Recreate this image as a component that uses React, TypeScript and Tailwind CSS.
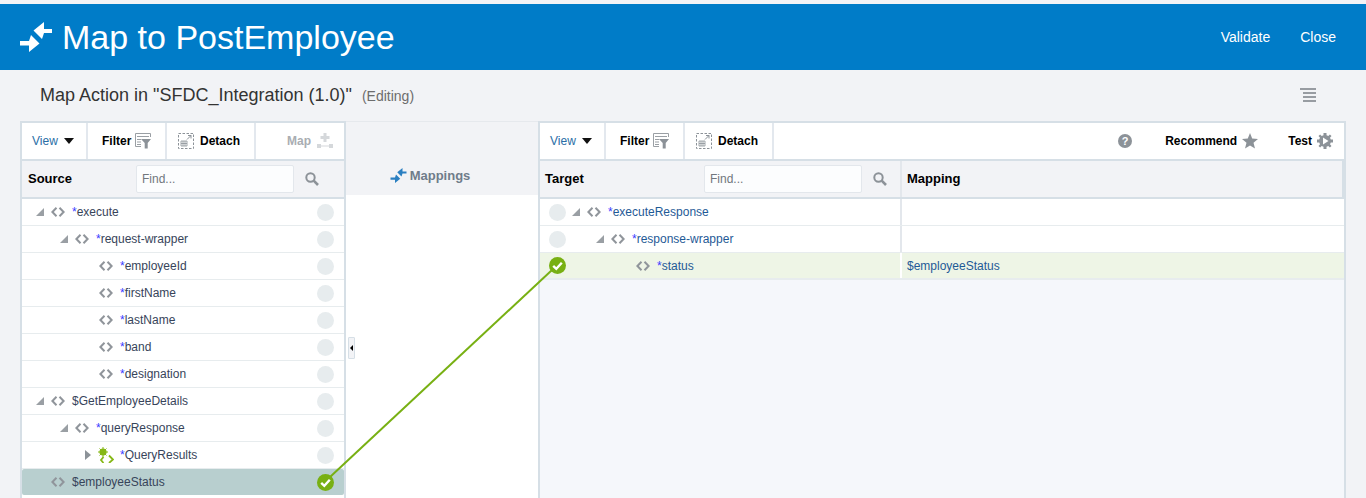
import React from 'react';

const sans = "font-['Liberation_Sans',Arial,sans-serif]";

const MapIcon = ({ className, color }: { className: string; color: string }) => (
  <svg viewBox="0 0 32 30" className={className} fill={color}>
    <path d="M24 0 L13.5 8.5 L22 17 L24 11 H32 V7 H24 Z" />
    <path d="M9 30 L19.5 21.5 L11 13 L9 19 H0 V23.5 H9 Z" />
  </svg>
);

const Code = ({ className = '' }: { className?: string }) => (
  <svg viewBox="0 0 14 10" className={`h-[10px] w-[14px] shrink-0 ${className}`} fill="none" stroke="#90959b" strokeWidth="2">
    <path d="M5.5 .8 L1.4 5 L5.5 9.2 M8.5 .8 L12.6 5 L8.5 9.2" />
  </svg>
);

const Expanded = () => (
  <svg viewBox="0 0 8 8" className="h-2 w-2 shrink-0" fill="#9a9fa4">
    <path d="M8 0 V8 H0 Z" />
  </svg>
);

const Collapsed = () => (
  <svg viewBox="0 0 6 10" className="h-[10px] w-[6px] shrink-0" fill="#8c9298">
    <path d="M0 0 L6 5 L0 10 Z" />
  </svg>
);

const Dot = () => <span className="block h-[17px] w-[17px] shrink-0 rounded-full bg-[#e7ecee]" />;

const Check = () => (
  <svg viewBox="0 0 17 17" className="h-[17px] w-[17px] shrink-0">
    <circle cx="8.5" cy="8.5" r="8.5" fill="#78b013" />
    <path d="M4.2 8.8 L7.3 11.8 L12.8 5.8" fill="none" stroke="#fff" strokeWidth="2.4" />
  </svg>
);

const FilterIcon = () => (
  <svg viewBox="0 0 16 16" className="h-4 w-4 shrink-0" fill="none" stroke="#9a9fa4">
    <path d="M.5 .5 H15.5 M.5 .5 V13.5 H6 M15.5 .5 V4" />
    <path d="M2 3.5 H14 M2 6.5 H6 M2 9 H6 M2 11.5 H6" />
    <path d="M6 6 H16 L12.7 10 V15.5 H9.7 V10 Z" fill="#8c9298" stroke="none" />
  </svg>
);

const DetachIcon = () => (
  <svg viewBox="0 0 16 16" className="h-4 w-4 shrink-0" fill="none" stroke="#8c9298">
    <path d="M.5 .5 H15.5 V15.5 H.5 Z" strokeDasharray="2.5 1.5" />
    <path d="M9 6.5 L13 2.5 M10 2.5 H13 V5.5" />
    <path d="M3 8 H9 V13 H3 Z M3 10.5 H9 M5 8 V13 M7 8 V13" strokeWidth=".8" />
  </svg>
);

const MapPlusIcon = () => (
  <svg viewBox="0 0 16 16" className="h-4 w-4 shrink-0" fill="#d5d8db">
    <path d="M6.5 0 H9.5 V3 H12.5 V6 H9.5 V9 H6.5 V6 H3.5 V3 H6.5 Z" />
    <path d="M0 11 H4 V15 H0 Z M12 11 H16 V15 H12 Z M4 12.5 H12 V13.5 H4 Z" />
  </svg>
);

const SearchIcon = () => (
  <svg viewBox="0 0 14 14" className="h-[14px] w-[14px] shrink-0" fill="none" stroke="#8c9298">
    <circle cx="5.5" cy="5.5" r="4.2" strokeWidth="2" />
    <path d="M8.7 8.7 L13 13" strokeWidth="2.6" />
  </svg>
);

const Caret = () => (
  <svg viewBox="0 0 10 6" className="h-[6px] w-[10px] shrink-0" fill="#111">
    <path d="M0 0 H10 L5 6 Z" />
  </svg>
);

const Toolbar = ({ children }: { children?: React.ReactNode }) => (
  <div className="flex h-[36px] shrink-0 items-stretch bg-white">
    <div className="flex w-[66px] items-center gap-[6px] border-r-2 border-[#e3e8ee] pl-[10px] text-xs text-[#2a6ea6]">
      View <Caret />
    </div>
    <div className="flex w-[79px] items-center gap-[4px] border-r-2 border-[#e3e8ee] pl-[14px] text-xs font-bold text-black">
      Filter <FilterIcon />
    </div>
    <div className="flex w-[89px] items-center gap-[6px] border-r-2 border-[#e3e8ee] pl-[11px] text-xs font-bold text-black">
      <DetachIcon /> Detach
    </div>
    {children}
  </div>
);

const Find = ({ className }: { className: string }) => (
  <div className={`flex h-[28px] items-center rounded-[2px] border border-[#e3e7ec] bg-[#fcfdfe] pl-[5px] text-xs text-[#71777d] ${className}`}>
    Find...
  </div>
);

const Name = ({ text, blue }: { text: string; blue?: boolean }) => {
  const star = text.startsWith('*');
  return (
    <span className={blue ? 'text-xs text-[#1f5a96]' : 'text-xs text-[#37445a]'}>
      {star && <span className="text-[#3a3aff]">*</span>}
      {star ? text.slice(1) : text}
    </span>
  );
};

type Row = { name: string; indent: number; tw?: 'open' | 'closed' | 'none'; spark?: boolean };

const sourceRows: Row[] = [
  { name: '*execute', indent: 15, tw: 'open' },
  { name: '*request-wrapper', indent: 39, tw: 'open' },
  { name: '*employeeId', indent: 63 },
  { name: '*firstName', indent: 63 },
  { name: '*lastName', indent: 63 },
  { name: '*band', indent: 63 },
  { name: '*designation', indent: 63 },
  { name: '$GetEmployeeDetails', indent: 15, tw: 'open' },
  { name: '*queryResponse', indent: 39, tw: 'open' },
  { name: '*QueryResults', indent: 63, tw: 'closed', spark: true },
];

const TreeRowHead = ({ row, blue }: { row: Row; blue?: boolean }) => (
  <div className="flex min-w-0 flex-1 items-center">
    <span className="flex w-[15px] shrink-0 justify-center">
      {row.tw === 'open' && <Expanded />}
      {row.tw === 'closed' && <Collapsed />}
    </span>
    {row.spark ? (
      <svg viewBox="0 0 16 16" className="ml-[3px] mr-[6px] h-[16px] w-[16px] shrink-0" fill="none" stroke="#86b817" strokeWidth="1.8">
        <circle cx="5" cy="5" r="3.6" fill="#86b817" stroke="none" />
        <path d="M5 0 V10 M0 5 H10 M1.5 1.5 L8.5 8.5 M8.5 1.5 L1.5 8.5" strokeWidth="1" />
        <path d="M5.5 10 L3 13 L5.5 16 M11 8.5 L15 12.5 L11 16" />
      </svg>
    ) : (
      <Code className="ml-[4px] mr-[7px]" />
    )}
    <Name text={row.name} blue={blue} />
  </div>
);

export default function App() {
  return (
    <div className={`relative h-[498px] w-[1366px] overflow-hidden bg-[#f2f3f6] pt-1 ${sans}`}>
      {/* header */}
      <div className="flex h-[66px] items-center justify-between bg-[#007cc8] pl-[20px] pr-[30px] text-white">
        <div className="flex items-center gap-[10px]">
          <MapIcon className="h-[30px] w-[32px]" color="#fff" />
          <span className="text-[34px] leading-none">Map to PostEmployee</span>
        </div>
        <div className="flex items-center gap-[30px] text-sm">
          <span>Validate</span>
          <span>Close</span>
        </div>
      </div>

      {/* sub header */}
      <div className="flex h-[51px] items-center justify-between pb-[2px] pl-[40px] pr-[50px]">
        <div className="flex items-baseline gap-[10px]">
          <span className="text-lg text-[#333]">Map Action in "SFDC_Integration (1.0)"</span>
          <span className="text-sm text-[#6d6d6d]">(Editing)</span>
        </div>
        <svg viewBox="0 0 16 14" className="h-[14px] w-4" fill="none" stroke="#7b8086" strokeWidth="1.4">
          <path d="M0 1 H16 M3 5 H16 M3 9 H16 M3 13 H16" />
        </svg>
      </div>

      <div className="flex pl-[20px] pr-[20px]">
        {/* source panel */}
        <div className="flex h-[377px] w-[326px] shrink-0 flex-col border-x-2 border-t-2 border-[#d6dfe6] bg-white">
          <Toolbar>
            <div className="flex flex-1 items-center justify-end gap-[6px] pr-[11px] text-xs font-bold text-[#a9adb2]">
              Map <MapPlusIcon />
            </div>
          </Toolbar>
          <div className="flex h-[40px] shrink-0 items-center border-y-2 border-[#d6dfe6] bg-[#f2f3f6] pl-[6px]">
            <span className="w-[108px] text-[13px] font-bold text-black">Source</span>
            <Find className="w-[158px]" />
            <span className="ml-[11px]"><SearchIcon /></span>
          </div>
          {sourceRows.map(row => (
            <div key={row.name} className="flex h-[27px] shrink-0 items-center border-b border-[#e7ecee] pr-[10px]" style={{ paddingLeft: row.indent - 5 }}>
              <TreeRowHead row={row} />
              <Dot />
            </div>
          ))}
          <div className="flex h-[26px] shrink-0 items-center rounded-[2px] bg-[#b8cfcf] pr-[10px] pl-[10px]">
            <TreeRowHead row={{ name: '$employeeStatus', indent: 15 }} />
            <Check />
          </div>
        </div>

        {/* mappings column */}
        <div className="relative flex h-[377px] w-[192px] shrink-0 flex-col">
          <div className="flex h-[74px] items-center justify-center gap-[3px] border-t border-[#e6e9ed] pr-[24px] pt-[34px] text-[13px] font-bold text-[#6f7c8a]">
            <MapIcon className="h-[15px] w-[17px]" color="#2a7fc1" />
            Mappings
          </div>
          <div className="flex-1 bg-white" />
          <div className="absolute left-[2px] top-[216px] flex h-[22px] w-[7px] items-center justify-center rounded-[1px] border border-[#d6dfe6] bg-[#f2f3f6]">
            <span className="h-0 w-0 border-y-[3px] border-r-[3px] border-y-transparent border-r-black" />
          </div>
        </div>

        {/* target panel */}
        <div className="flex h-[377px] flex-1 flex-col border-x-2 border-t-2 border-[#d6dfe6] bg-[#f5f7fb]">
          <Toolbar>
            <div className="flex flex-1 items-center justify-end bg-white pr-[11px] text-xs font-bold text-black">
              <svg viewBox="0 0 14 14" className="mr-[33px] h-[14px] w-[14px]">
                <circle cx="7" cy="7" r="7" fill="#8c9298" />
                <text x="7" y="11" textAnchor="middle" fontSize="11" fontWeight="bold" fill="#fff">?</text>
              </svg>
              <span>Recommend</span>
              <svg viewBox="0 0 16 16" className="ml-[5px] mr-[30px] h-4 w-4" fill="#8c9298">
                <path d="M8 0 L10.2 5.6 L16 6 L11.5 9.7 L13 15.6 L8 12.4 L3 15.6 L4.5 9.7 L0 6 L5.8 5.6 Z" />
              </svg>
              <span>Test</span>
              <svg viewBox="0 0 16 16" className="ml-[5px] h-4 w-4" fill="#8c9298">
                <path fillRule="evenodd" d="M6.5 0 H9.5 V2.2 L11.3 3 L12.9 1.5 L14.5 3.1 L13 4.7 L13.8 6.5 H16 V9.5 H13.8 L13 11.3 L14.5 12.9 L12.9 14.5 L11.3 13 L9.5 13.8 V16 H6.5 V13.8 L4.7 13 L3.1 14.5 L1.5 12.9 L3 11.3 L2.2 9.5 H0 V6.5 H2.2 L3 4.7 L1.5 3.1 L3.1 1.5 L4.7 3 L6.5 2.2 Z M6 4.5 V11.5 L11.5 8 Z" />
              </svg>
            </div>
          </Toolbar>
          <div className="flex h-[40px] shrink-0 items-stretch border-y-2 border-[#d6dfe6] bg-[#f2f3f6]">
            <div className="flex w-[362px] items-center border-r-2 border-[#e3e7ec] pl-[5px]">
              <span className="w-[159px] text-[13px] font-bold text-black">Target</span>
              <Find className="w-[158px]" />
              <span className="ml-[11px]"><SearchIcon /></span>
            </div>
            <div className="flex flex-1 items-center border-r-2 border-[#d6dfe6] pl-[5px] text-[13px] font-bold text-black">Mapping</div>
          </div>
          {[
            { name: '*executeResponse', indent: 28, tw: 'open' as const },
            { name: '*response-wrapper', indent: 52, tw: 'open' as const },
          ].map(row => (
            <div key={row.name} className="flex h-[27px] shrink-0 items-stretch border-b border-[#e7ecee] bg-white">
              <div className="flex w-[362px] items-center border-r-2 border-[#e3e7ec] pl-[9px]">
                <Dot />
                <span style={{ width: row.indent - 26 }} className="shrink-0" />
                <TreeRowHead row={row} blue />
              </div>
            </div>
          ))}
          <div className="flex h-[27px] shrink-0 items-stretch border-b-2 border-[#e7ecee] bg-[#eef5e6]">
            <div className="flex w-[362px] items-center border-r-2 border-white pl-[9px]">
              <Check />
              <span className="w-[70px] shrink-0" />
              <Code className="mr-[7px]" />
              <Name text="*status" blue />
            </div>
            <div className="flex flex-1 items-center pl-[5px] text-xs text-[#1f5a96]">$employeeStatus</div>
          </div>
        </div>
      </div>

      {/* link between source and target */}
      <svg className="absolute left-0 top-0 h-[498px] w-[1366px]" fill="none" stroke="#78b013" strokeWidth="2">
        <path d="M330 477 L552 270" />
      </svg>
    </div>
  );
}
